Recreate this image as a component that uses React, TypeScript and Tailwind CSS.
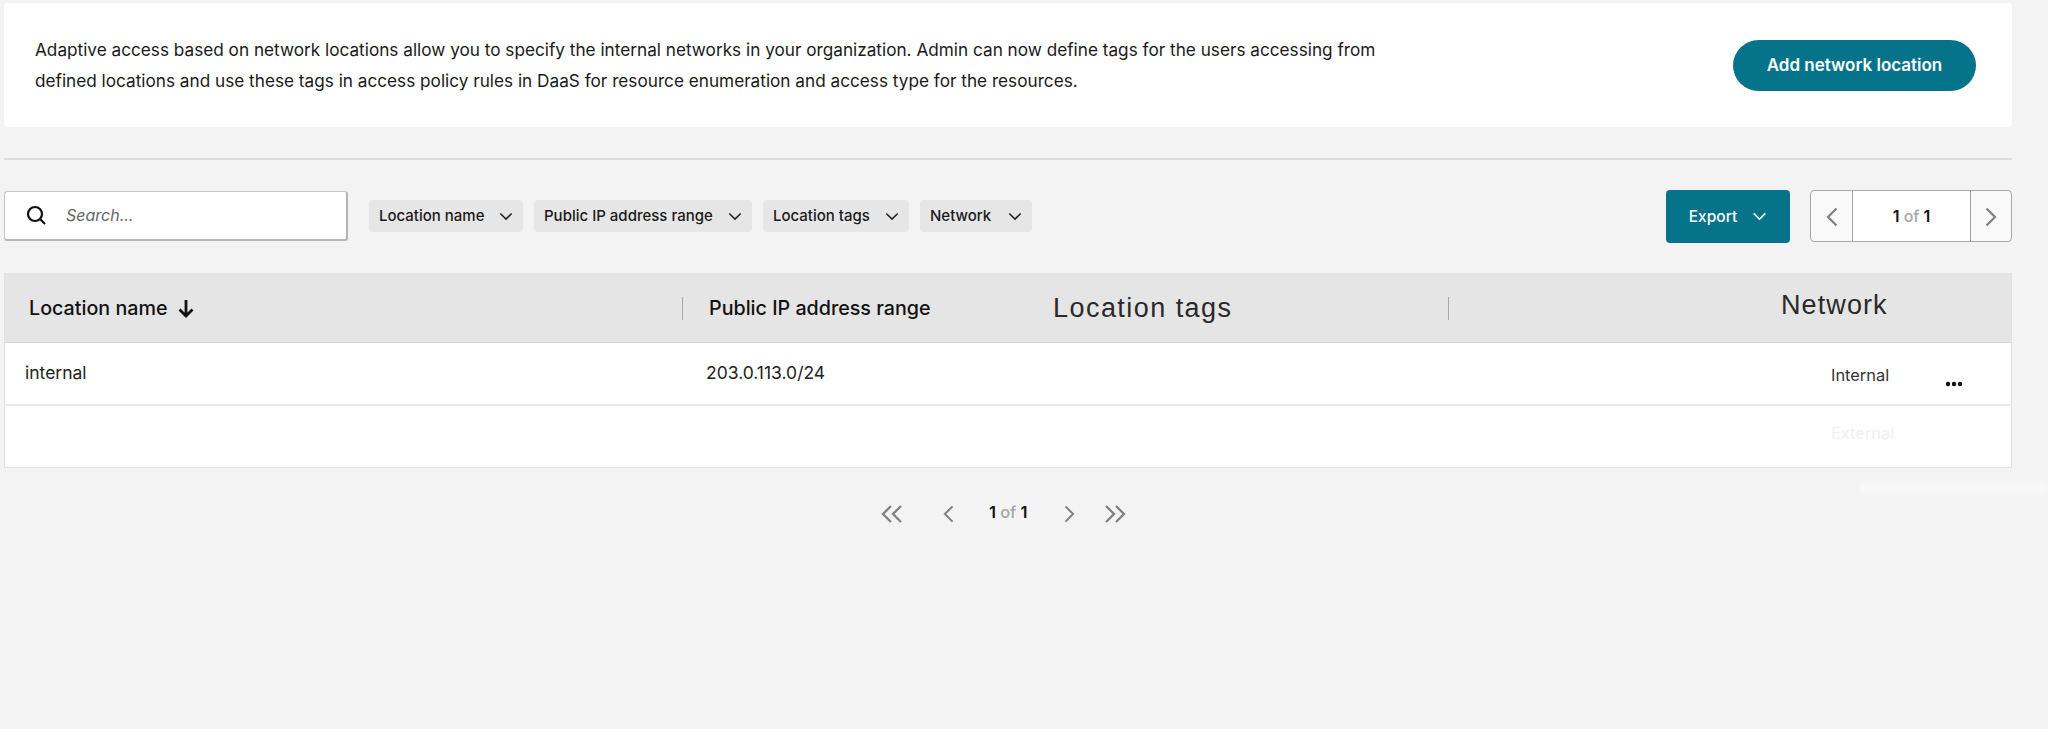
import React from "react";

const Chevron = ({ dir, className }: { dir: "l" | "r"; className: string }) => (
  <svg viewBox="0 0 12 20" fill="none" stroke="currentColor" strokeWidth="2.2" className={className}>
    <path d={dir === "l" ? "M10.5 1.5 2 10l8.5 8.5" : "M1.5 1.5 10 10l-8.5 8.5"} />
  </svg>
);

const Double = ({ dir }: { dir: "l" | "r" }) => (
  <svg viewBox="0 0 22 18" fill="none" stroke="currentColor" strokeWidth="2.3" className="w-[22px] h-[18px] text-[#808080]">
    <path d={dir === "l" ? "M10 1 2 9l8 8M20 1l-8 8 8 8" : "M2 1l8 8-8 8M12 1l8 8-8 8"} />
  </svg>
);

const Down = ({ className }: { className: string }) => (
  <svg viewBox="0 0 16 10" fill="none" stroke="currentColor" strokeWidth="1.7" className={className}>
    <path d="M1.5 1.5 8 8l6.5-6.5" />
  </svg>
);

const Chip = ({ label, w }: { label: string; w: string }) => (
  <div className={`${w} h-[32px] bg-[#e6e6e6] rounded-[4px] flex items-center justify-between pl-[10px] pr-[10px] text-[15px] font-medium text-[#1a1a1a]`}>
    <span>{label}</span>
    <Down className="w-[14px] h-[9px] text-[#222]" />
  </div>
);

const OfOne = ({ size }: { size: string }) => (
  <span className={`${size} font-semibold text-[#111]`}>
    1 <span className="text-[#a6a6a6] font-medium">of</span> 1
  </span>
);

export default function App() {
  return (
    <div className="relative w-[2048px] h-[729px] overflow-hidden bg-[#f3f3f3] pt-[3px] pl-[4px] pr-[36px] font-['Inter','Liberation_Sans',sans-serif] text-[#111]">
      <div className="h-[124px] bg-white rounded-[3px] flex items-start justify-between pl-[31px] pr-[36px]">
        <p className="mt-[31px] text-[17.2px] leading-[31px] text-[#1a1a1a] whitespace-nowrap">
          Adaptive access based on network locations allow you to specify the internal networks in your organization. Admin can now define tags for the users accessing from
          <br />
          defined locations and use these tags in access policy rules in DaaS for resource enumeration and access type for the resources.
        </p>
        <button className="mt-[37px] w-[243px] h-[51px] rounded-full bg-[#05748a] text-white text-[17px] font-semibold">
          Add network location
        </button>
      </div>

      <div className="mt-[31px] h-[2px] bg-[#dcdcdc]" />

      <div className="mt-[30px] h-[53px] flex items-center">
        <div className="w-[344px] h-[50px] bg-white rounded-[3px] border border-[#c4c4c4] border-b-2 border-r-2 border-b-[#b4b4b4] border-r-[#b4b4b4] flex items-center pl-[21px] mb-[2px]">
          <svg viewBox="0 0 20 20" fill="none" stroke="#111" strokeWidth="2.2" className="w-[20px] h-[20px]">
            <circle cx="9" cy="9" r="7" />
            <path d="m14 14 5 5" />
          </svg>
          <span className="ml-[20px] italic text-[16px] text-[#666]">Search...</span>
        </div>
        <div className="ml-[21px] flex gap-[11px] mb-[1px]">
          <Chip label="Location name" w="w-[154px]" />
          <Chip label="Public IP address range" w="w-[218px]" />
          <Chip label="Location tags" w="w-[146px]" />
          <Chip label="Network" w="w-[112px]" />
        </div>
        <button className="ml-auto w-[124px] h-[53px] bg-[#05748a] rounded-[4px] text-white text-[15.5px] font-medium flex items-center justify-center gap-[15px]">
          Export
          <Down className="w-[15px] h-[9px]" />
        </button>
        <div className="ml-[20px] w-[202px] h-[52px] rounded-[4px] border border-[#a8a8a8] flex mb-[1px] bg-[#f9f9f9]">
          <div className="w-[41px] flex items-center justify-center text-[#808080]">
            <Chevron dir="l" className="w-[12px] h-[20px] mt-[2px]" />
          </div>
          <div className="flex-1 bg-white border-x border-[#a0a0a0] flex items-center justify-center">
            <OfOne size="text-[16px]" />
          </div>
          <div className="w-[40px] flex items-center justify-center text-[#808080]">
            <Chevron dir="r" className="w-[12px] h-[20px] mt-[2px]" />
          </div>
        </div>
      </div>

      <div className="mt-[30px] border-x border-b border-[#e2e2e2] bg-white">
        <div className="h-[70px] pt-[2px] bg-[#e5e5e5] border-b border-[#d8d8d8] flex items-center text-[19.7px] font-medium text-[#111]">
          <div className="w-[677px] pl-[24px] flex items-center gap-[11px] h-[23px]">
            Location name
            <svg viewBox="0 0 16 18" fill="none" stroke="#111" strokeWidth="2.8" className="w-[16px] h-[18px]">
              <path d="M8 0v16M1.5 9.5 8 16l6.5-6.5" />
            </svg>
          </div>
          <div className="w-[371px] h-[23px] pl-[26px] border-l border-[#a8a8a8] flex items-center">Public IP address range</div>
          <div className="w-[395px] font-['Liberation_Sans',sans-serif] font-normal text-[27px] tracking-[1.45px] text-[#2a2a2a] mb-[1px]">Location tags</div>
          <div className="relative flex-1 h-[23px] border-l border-[#a8a8a8] flex items-center">
            <span className="ml-[332px] font-['Liberation_Sans',sans-serif] text-[27px] tracking-[1.1px] font-normal text-[#2a2a2a] mb-[7px]">Network</span>
          </div>
        </div>
        <div className="h-[63px] border-b-2 border-[#e8e8e8] flex items-center text-[17.5px] text-[#222]">
          <div className="w-[677px] pl-[20px]">internal</div>
          <div className="w-[1149px] pl-[24px]">203.0.113.0/24</div>
          <div className="w-[60px] text-[16.4px] mt-[3px] text-[#333]">Internal</div>
          <svg viewBox="0 0 18 6" fill="#111" className="ml-[54px] w-[18px] h-[6px] mt-[20px]">
            <circle cx="3" cy="3" r="2.2" />
            <circle cx="9" cy="3" r="2.2" />
            <circle cx="15" cy="3" r="2.2" />
          </svg>
        </div>
        <div className="h-[61px] flex items-center text-[16.4px] text-[#f0f0f0]">
          <div className="ml-[1826px] mb-[6px]">External</div>
        </div>
      </div>

      <div className="mt-[32px] ml-[877px] flex items-center">
        <Double dir="l" />
        <Chevron dir="l" className="ml-[40px] w-[11px] h-[18px] text-[#808080]" />
        <span className="ml-[35px] mb-[4px]"><OfOne size="text-[16.5px]" /></span>
        <Chevron dir="r" className="ml-[36px] w-[11px] h-[18px] text-[#808080]" />
        <span className="ml-[29px]"><Double dir="r" /></span>
      </div>

      <div className="absolute left-[1860px] top-[482px] w-[190px] h-[12px] bg-[#f9f9f9] blur-[3px]" />
    </div>
  );
}
